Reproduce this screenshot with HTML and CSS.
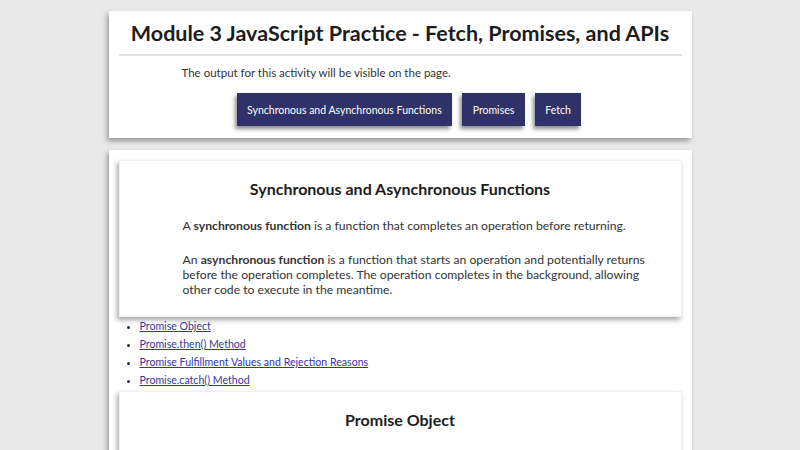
FILE: index.html
```html
<!DOCTYPE html>
<html lang="en">
<head>
<meta charset="utf-8">
<title>Module 3 JavaScript Practice</title>
<link rel="stylesheet" href="styles.css">
</head>
<body>
<header class="card header">
  <h1 class="title">Module 3 JavaScript Practice - Fetch, Promises, and APIs</h1>
  <p class="intro">The output for this activity will be visible on the page.</p>
  <nav class="buttons">
    <button class="btn">Synchronous and Asynchronous Functions</button>
    <button class="btn">Promises</button>
    <button class="btn">Fetch</button>
  </nav>
</header>
<main class="card content">
  <section class="panel">
    <h2 class="panel-title">Synchronous and Asynchronous Functions</h2>
    <p class="text">A <strong>synchronous function</strong> is a function that completes an operation before returning.</p>
    <p class="text">An <strong>asynchronous function</strong> is a function that starts an operation and potentially returns before the operation completes. The operation completes in the background, allowing other code to execute in the meantime.</p>
  </section>
  <ul class="links">
    <li><a href="#">Promise Object</a></li>
    <li><a href="#">Promise.then() Method</a></li>
    <li><a href="#">Promise Fulfillment Values and Rejection Reasons</a></li>
    <li><a href="#">Promise.catch() Method</a></li>
  </ul>
  <section class="panel">
    <h2 class="panel-title">Promise Object</h2>
    <p class="text">A Promise is an object representing the eventual completion or failure of an asynchronous operation.</p>
  </section>
</main>
</body>
</html>
```
FILE: styles.css
```css
html, body {
  margin: 0;
  padding: 0;
}
body {
  background: #e9e9e9;
  font-family: "Lato", "Open Sans", sans-serif;
  color: #2b2b2b;
  padding-top: 11px;
}
.card {
  width: 583px;
  margin: 0 auto;
  background: #fff;
  box-sizing: border-box;
  box-shadow: -2px 3px 5px rgba(0, 0, 0, 0.35);
}
.header {
  padding: 8px 10px 12px;
}
.title {
  margin: 0;
  font-size: 21.5px;
  line-height: 28px;
  font-weight: 700;
  color: #1c1c1c;
  text-align: center;
  padding-bottom: 7px;
  border-bottom: 2px solid #e2e2e2;
}
.intro {
  margin: 9px 0 0;
  padding-left: 63px;
  font-size: 11.5px;
  line-height: 16px;
  color: #333;
}
.buttons {
  display: flex;
  justify-content: center;
  gap: 10px;
  margin-top: 12px;
  padding-left: 18px;
}
.btn {
  font-family: inherit;
  font-size: 10.5px;
  color: #fff;
  background: #2f3268;
  border: none;
  height: 33px;
  padding: 0 10.5px;
  box-shadow: -2px 3px 4px rgba(0, 0, 0, 0.45);
}
.content {
  margin-top: 12px;
  padding: 10px 10px 0;
}
.panel {
  padding: 18px 0 19px;
  box-shadow: -2px 3px 5px rgba(0, 0, 0, 0.35);
  border: 1px solid #f0f0f0;
}
.panel-title {
  margin: 0 0 19px;
  font-size: 16px;
  line-height: 20px;
  font-weight: 700;
  color: #1c1c1c;
  text-align: center;
}
.text {
  margin: 0 28px 19px 63px;
  font-size: 12.2px;
  line-height: 15px;
  color: #333;
}
.text:last-child {
  margin-bottom: 0;
}
.links {
  margin: 0 0 2px;
  padding-left: 21px;
  font-size: 10.6px;
  line-height: 18px;
}
.links a {
  color: #34369a;
}
```
